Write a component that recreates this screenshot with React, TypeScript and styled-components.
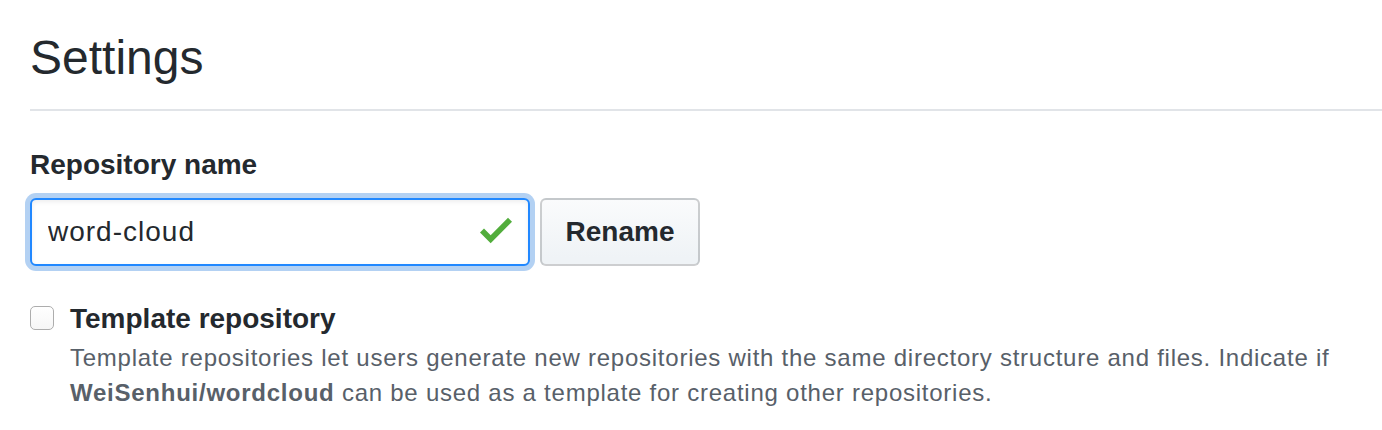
import React from "react";
import styled, { createGlobalStyle } from "styled-components";

const GlobalStyle = createGlobalStyle`
  body {
    margin: 0;
    background: #fff;
    font-family: "Liberation Sans", Arial, sans-serif;
    color: #24292e;
  }
`;

const Page = styled.div`
  padding: 28px 0 0 30px;
`;

const Subhead = styled.div`
  border-bottom: 2px solid #e1e4e8;
  padding-bottom: 21px;
  margin-bottom: 33px;
`;

const Heading = styled.h2`
  margin: 0;
  font-size: 48px;
  font-weight: 400;
  line-height: 60px;
`;

const Label = styled.label`
  display: block;
  font-size: 28px;
  font-weight: 700;
  line-height: 42px;
  margin-bottom: 12px;
`;

const FieldRow = styled.div`
  display: flex;
  align-items: center;
  gap: 10px;
`;

const InputWrap = styled.div`
  position: relative;
  width: 500px;
`;

const TextInput = styled.input`
  box-sizing: border-box;
  width: 100%;
  height: 68px;
  padding: 0 60px 0 16px;
  font-family: inherit;
  font-size: 28px;
  letter-spacing: 1px;
  color: #24292e;
  border: 2px solid #2188ff;
  border-radius: 6px;
  outline: none;
  box-shadow: inset 0 2px 4px rgba(27, 31, 35, 0.075),
    0 0 0 5px rgba(3, 102, 214, 0.3);
`;

const Check = styled.svg`
  position: absolute;
  right: 18px;
  top: 19px;
  width: 32px;
  height: 27px;
  fill: #52ad3c;
`;

const Button = styled.button`
  box-sizing: border-box;
  height: 68px;
  width: 160px;
  font-family: inherit;
  font-size: 28px;
  font-weight: 700;
  color: #24292e;
  background: linear-gradient(-180deg, #fafbfc 0%, #eff3f6 90%);
  border: 2px solid rgba(27, 31, 35, 0.2);
  border-radius: 6px;
  cursor: pointer;
`;

const CheckGroup = styled.div`
  display: flex;
  gap: 16px;
  margin-top: 32px;
`;

const Box = styled.span`
  box-sizing: border-box;
  flex: none;
  width: 24px;
  height: 24px;
  margin-top: 8px;
  border: 1.5px solid #adadad;
  border-radius: 5px;
  background: linear-gradient(#fff, #f6f6f6);
`;

const CheckBody = styled.div`
  flex: 1;
`;

const CheckTitle = styled.div`
  font-size: 28px;
  font-weight: 700;
  line-height: 42px;
`;

const Note = styled.p`
  margin: 0;
  max-width: 1300px;
  font-size: 24px;
  letter-spacing: 0.75px;
  line-height: 35px;
  color: #586069;

  strong {
    font-weight: 700;
  }
`;

export default function App() {
  return (
    <>
      <GlobalStyle />
      <Page>
        <Subhead>
          <Heading>Settings</Heading>
        </Subhead>
        <Label htmlFor="rename-field">Repository name</Label>
        <FieldRow>
          <InputWrap>
            <TextInput id="rename-field" defaultValue="word-cloud" />
            <Check viewBox="0 3.5 12 9.5">
              <path d="M12 5l-8 8-4-4 1.5-1.5L4 10l6.5-6.5L12 5z" />
            </Check>
          </InputWrap>
          <Button>Rename</Button>
        </FieldRow>
        <CheckGroup>
          <Box />
          <CheckBody>
            <CheckTitle>Template repository</CheckTitle>
            <Note>
              Template repositories let users generate new repositories with the
              same directory structure and files. Indicate if{" "}
              <strong>WeiSenhui/wordcloud</strong> can be used as a template for
              creating other repositories.
            </Note>
          </CheckBody>
        </CheckGroup>
      </Page>
    </>
  );
}
